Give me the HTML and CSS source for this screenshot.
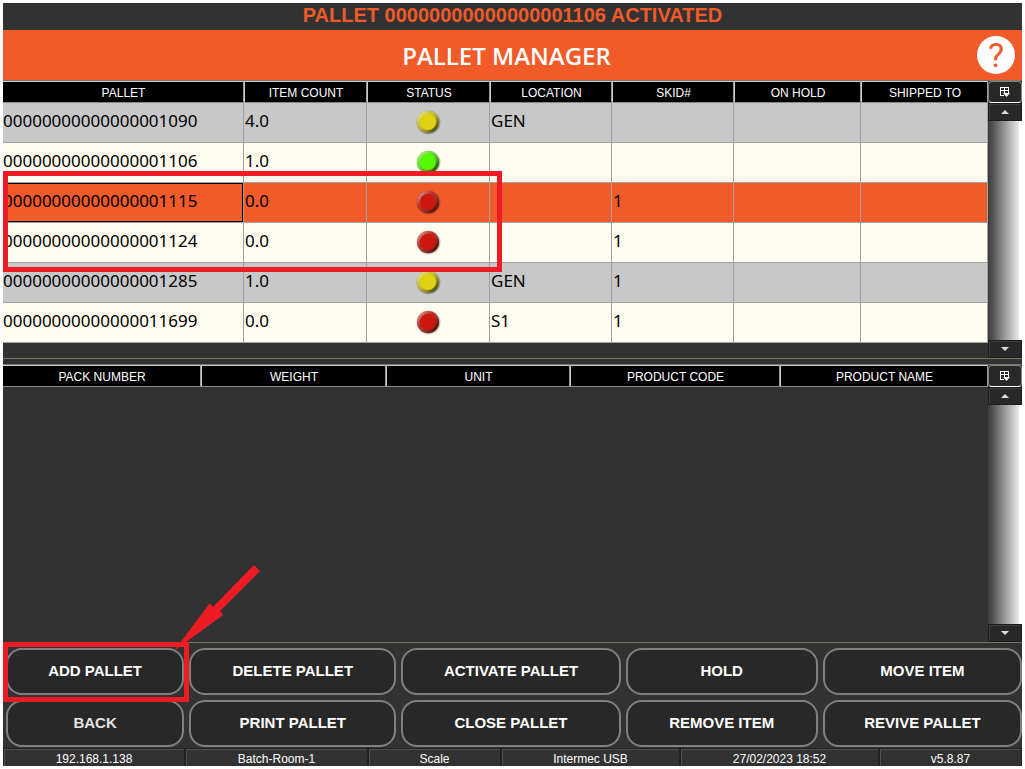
FILE: index.html
```html
<!DOCTYPE html>
<html lang="en">
<head>
  <meta charset="UTF-8">
  <title>Pallet Manager</title>
  <meta name="viewport" content="width=device-width, initial-scale=1" />

  <link rel="stylesheet" href="styles.css">
</head>
<body>

  <!-- Shared icons -->
  <svg class="sprite" aria-hidden="true">
    <defs>
      <linearGradient id="rim" x1="0" y1="0" x2="1" y2="1">
        <stop offset="0.1" stop-color="#fff" stop-opacity="0.6" />
        <stop offset="0.4" stop-color="#888" stop-opacity="0.2" />
        <stop offset="0.9" stop-color="#000" stop-opacity="0.75" />
      </linearGradient>
      <radialGradient id="shade">
        <stop offset="0.75" stop-color="#000" stop-opacity="0.6" />
        <stop offset="1" stop-color="#000" stop-opacity="0" />
      </radialGradient>
    </defs>
    <symbol id="led" viewBox="0 0 26 26">
      <circle cx="13.500" cy="13.500" r="12.500" fill="url(#shade)" />
      <circle cx="13" cy="13" r="11" fill="currentColor" />
      <circle cx="13" cy="13" r="11" fill="url(#rim)" />
      <circle cx="13" cy="13" r="8" fill="currentColor" />
    </symbol>
    <symbol id="columns" viewBox="0 0 11 11">
      <path d="M0 0.500H9M0 3.500H9M0.500 0V9M0 8.500H4M4.500 0V7M8.500 0V6" fill="none" stroke="#fff" stroke-width="1" />
      <path d="M3 6H10L6.500 10Z" fill="#fff" />
    </symbol>
    <symbol id="up" viewBox="0 0 8 4">
      <path d="M4 0L8 4H0Z" fill="#ddd" />
    </symbol>
    <symbol id="down" viewBox="0 0 8 4">
      <path d="M0 0H8L4 4Z" fill="#ddd" />
    </symbol>
  </svg>

  <div class="app">
    <div class="message">PALLET 00000000000000001106 ACTIVATED</div>

    <header class="title-bar">
      <h1>PALLET MANAGER</h1>
      <button type="button" class="btn-help" aria-label="Help">?</button>
    </header>

    <!-- Pallets -->
    <section class="panel pallets">
      <div class="table-area">
        <table>
          <colgroup>
            <col class="col-pallet"><col class="col-count"><col class="col-status"><col class="col-location">
            <col class="col-skid"><col class="col-hold"><col class="col-shipped">
          </colgroup>
          <thead>
            <tr>
              <th>PALLET</th>
              <th>ITEM COUNT</th>
              <th>STATUS</th>
              <th>LOCATION</th>
              <th>SKID#</th>
              <th>ON HOLD</th>
              <th>SHIPPED TO</th>
            </tr>
          </thead>
          <tbody>
            <tr class="grey">
              <td>00000000000000001090</td><td>4.0</td>
              <td class="status"><svg class="led yellow"><use href="#led" /></svg></td>
              <td>GEN</td><td></td><td></td><td></td>
            </tr>
            <tr>
              <td>00000000000000001106</td><td>1.0</td>
              <td class="status"><svg class="led green"><use href="#led" /></svg></td>
              <td></td><td></td><td></td><td></td>
            </tr>
            <tr class="selected">
              <td class="focused">00000000000000001115</td><td>0.0</td>
              <td class="status"><svg class="led red"><use href="#led" /></svg></td>
              <td></td><td>1</td><td></td><td></td>
            </tr>
            <tr>
              <td>00000000000000001124</td><td>0.0</td>
              <td class="status"><svg class="led red"><use href="#led" /></svg></td>
              <td></td><td>1</td><td></td><td></td>
            </tr>
            <tr class="grey">
              <td>00000000000000001285</td><td>1.0</td>
              <td class="status"><svg class="led yellow"><use href="#led" /></svg></td>
              <td>GEN</td><td>1</td><td></td><td></td>
            </tr>
            <tr>
              <td>00000000000000011699</td><td>0.0</td>
              <td class="status"><svg class="led red"><use href="#led" /></svg></td>
              <td>S1</td><td>1</td><td></td><td></td>
            </tr>
          </tbody>
        </table>
        <div class="highlight highlight-rows"></div>
      </div>
      <div class="scroll">
        <button type="button" class="btn-columns" aria-label="Columns"><svg><use href="#columns" /></svg></button>
        <button type="button" class="btn-scroll" aria-label="Scroll up"><svg><use href="#up" /></svg></button>
        <div class="track"></div>
        <button type="button" class="btn-scroll" aria-label="Scroll down"><svg><use href="#down" /></svg></button>
      </div>
    </section>

    <!-- Packs on the selected pallet -->
    <section class="panel packs">
      <div class="table-area">
        <table>
          <colgroup>
            <col class="col-pack"><col class="col-weight"><col class="col-unit"><col class="col-code"><col class="col-name">
          </colgroup>
          <thead>
            <tr>
              <th>PACK NUMBER</th>
              <th>WEIGHT</th>
              <th>UNIT</th>
              <th>PRODUCT CODE</th>
              <th>PRODUCT NAME</th>
            </tr>
          </thead>
        </table>
      </div>
      <div class="scroll">
        <button type="button" class="btn-columns" aria-label="Columns"><svg><use href="#columns" /></svg></button>
        <button type="button" class="btn-scroll" aria-label="Scroll up"><svg><use href="#up" /></svg></button>
        <div class="track"></div>
        <button type="button" class="btn-scroll" aria-label="Scroll down"><svg><use href="#down" /></svg></button>
      </div>
    </section>

    <div class="actions">
      <div class="marked">
        <button type="button" class="btn">ADD PALLET</button>
        <div class="highlight highlight-btn"></div>
        <svg class="arrow" viewBox="0 0 90 90" aria-hidden="true">
          <path d="M80 0L86 6L46 46L49 50L0 86L36 38L39 42Z" fill="#ed1c24" />
        </svg>
      </div>
      <button type="button" class="btn">DELETE PALLET</button>
      <button type="button" class="btn">ACTIVATE PALLET</button>
      <button type="button" class="btn">HOLD</button>
      <button type="button" class="btn">MOVE ITEM</button>
      <button type="button" class="btn btn-back">BACK</button>
      <button type="button" class="btn">PRINT PALLET</button>
      <button type="button" class="btn">CLOSE PALLET</button>
      <button type="button" class="btn">REMOVE ITEM</button>
      <button type="button" class="btn">REVIVE PALLET</button>
    </div>

    <footer class="status-bar">
      <span>192.168.1.138</span>
      <span>Batch-Room-1</span>
      <span>Scale</span>
      <span>Intermec USB</span>
      <span>27/02/2023 18:52</span>
      <span>v5.8.87</span>
    </footer>
  </div>

</body>
</html>
```

FILE: styles.css
```css
* {
  box-sizing: border-box;
}

body {
  margin: 0;
  padding: 3px;
  background: #fff;
  font-family: "Liberation Sans", Arial, sans-serif;
  font-size: 12px;
  color: #fff;
}

button {
  margin: 0;
  padding: 0;
  font-family: inherit;
  color: inherit;
  cursor: pointer;
}

.sprite {
  position: absolute;
  width: 0;
  height: 0;
}

.app {
  display: flex;
  flex-direction: column;
  min-height: calc(100vh - 6px);
  background: #323232;
}

.message {
  height: 27px;
  line-height: 24px;
  text-align: center;
  font-size: 20px;
  font-weight: bold;
  color: #f15a29;
}

/* Title */
.title-bar {
  display: flex;
  align-items: center;
  height: 50px;
  padding-right: 7px;
  background: #f15a29;
}

.title-bar h1 {
  flex: 1;
  margin: 0;
  padding: 2px 0 0 33px;
  text-align: center;
  font-family: "Open Sans", "Noto Sans", sans-serif;
  font-size: 24px;
  font-weight: 600;
  line-height: 32px;
}

.btn-help {
  width: 38px;
  height: 38px;
  border: none;
  border-radius: 50%;
  background: #fff;
  color: #f15a29;
  font-family: Roboto, sans-serif;
  font-size: 34px;
  font-weight: 400;
  line-height: 38px;
}

/* Tables */
.panel {
  display: flex;
  border-top: 1px solid #777;
  border-bottom: 1px solid #7a7565;
}

.pallets {
  margin-bottom: 5px;
}

.pallets .table-area {
  padding-bottom: 15px;
}

.packs {
  flex: 1;
}

.table-area {
  position: relative;
  flex: 1;
}

table {
  width: 100%;
  table-layout: fixed;
  border-collapse: separate;
  border-spacing: 0;
}

.col-pallet { width: 241px; }
.col-count { width: 123px; }
.col-status { width: 123px; }
.col-location { width: 122px; }
.col-skid { width: 122px; }
.col-hold { width: 127px; }
.col-shipped { width: 127px; }

.col-pack { width: 198px; }
.col-weight { width: 185px; }
.col-unit { width: 184px; }
.col-code { width: 210px; }
.col-name { width: 208px; }

th {
  height: 22px;
  padding: 2px 0 0 1px;
  border-top: 1px solid #ccc;
  border-right: 1px solid #999;
  border-bottom: 1px solid #888;
  background: #000;
  font-size: 12px;
  font-weight: normal;
}

th + th {
  border-left: 1px solid #ccc;
}

td {
  height: 40px;
  padding: 0 0 4px 1px;
  border-right: 1px solid #a0a0a0;
  border-bottom: 1px solid #a0a0a0;
  background: #fffdf0;
  color: #000;
  font-family: "Noto Sans", "Open Sans", sans-serif;
  font-size: 17px;
  line-height: 24px;
}

td:first-child {
  padding-left: 0;
}

.grey td {
  background: #c8c8c8;
}

.selected td {
  background: #f15a29;
}

.selected .focused {
  box-shadow: inset 0 0 0 1px #000;
}

td.status {
  padding: 0 0 2px;
  text-align: center;
}

.led {
  display: block;
  width: 26px;
  height: 26px;
  margin: 0 auto;
}

.yellow { color: #e0d212; }
.green { color: #55f808; }
.red { color: #cc170f; }

/* Scrollbars */
.scroll {
  display: flex;
  flex-direction: column;
  width: 34px;
}

.btn-columns {
  display: flex;
  align-items: center;
  justify-content: center;
  height: 22px;
  border: 1px solid #8a8578;
  border-bottom-color: #fff;
  border-radius: 4px;
  background: #282828;
}

.btn-columns svg {
  width: 11px;
  height: 11px;
}

.btn-scroll {
  display: flex;
  align-items: center;
  justify-content: center;
  height: 18px;
  border: 1px solid #1c1c1c;
  background: #282828;
  box-shadow: inset 1px 1px 0 #3c3c3c;
}

.btn-scroll svg {
  width: 8px;
  height: 4px;
}

.track {
  flex: 1;
  background: linear-gradient(90deg, #3c3c3c, #555 15%, #e8e8e8 90%, #fff 91%);
}

/* Buttons */
.actions {
  display: grid;
  grid-template-columns: 178fr 207fr 219fr 192fr 199fr;
  gap: 5px;
  padding: 5px 0 1px 3px;
}

.marked {
  position: relative;
  display: grid;
}

.btn {
  height: 47px;
  padding-bottom: 2px;
  border: 2px solid #808080;
  border-radius: 16px;
  background: #282828;
  font-size: 15px;
  font-weight: bold;
}

.btn-back {
  color: #e4e4e4;
}

/* Red markers */
.highlight {
  position: absolute;
  z-index: 1;
  border: 5px solid #ed1c24;
  pointer-events: none;
}

.highlight-rows {
  top: 90px;
  left: 0;
  width: 499px;
  height: 101px;
}

.highlight-btn {
  top: -6px;
  right: -5px;
  bottom: -7px;
  left: -3px;
}

.arrow {
  position: absolute;
  right: -80px;
  bottom: 40px;
  width: 90px;
  height: 90px;
  pointer-events: none;
}

/* Status bar */
.status-bar {
  display: grid;
  grid-template-columns: 182fr 183fr 133fr 179fr 199fr 143fr;
  grid-template-rows: 18px;
  overflow: hidden;
}

.status-bar span {
  border: 1px solid #222;
  border-bottom: none;
  box-shadow: inset 1px 1px 0 #505050;
  text-align: center;
  line-height: 20px;
}
```
